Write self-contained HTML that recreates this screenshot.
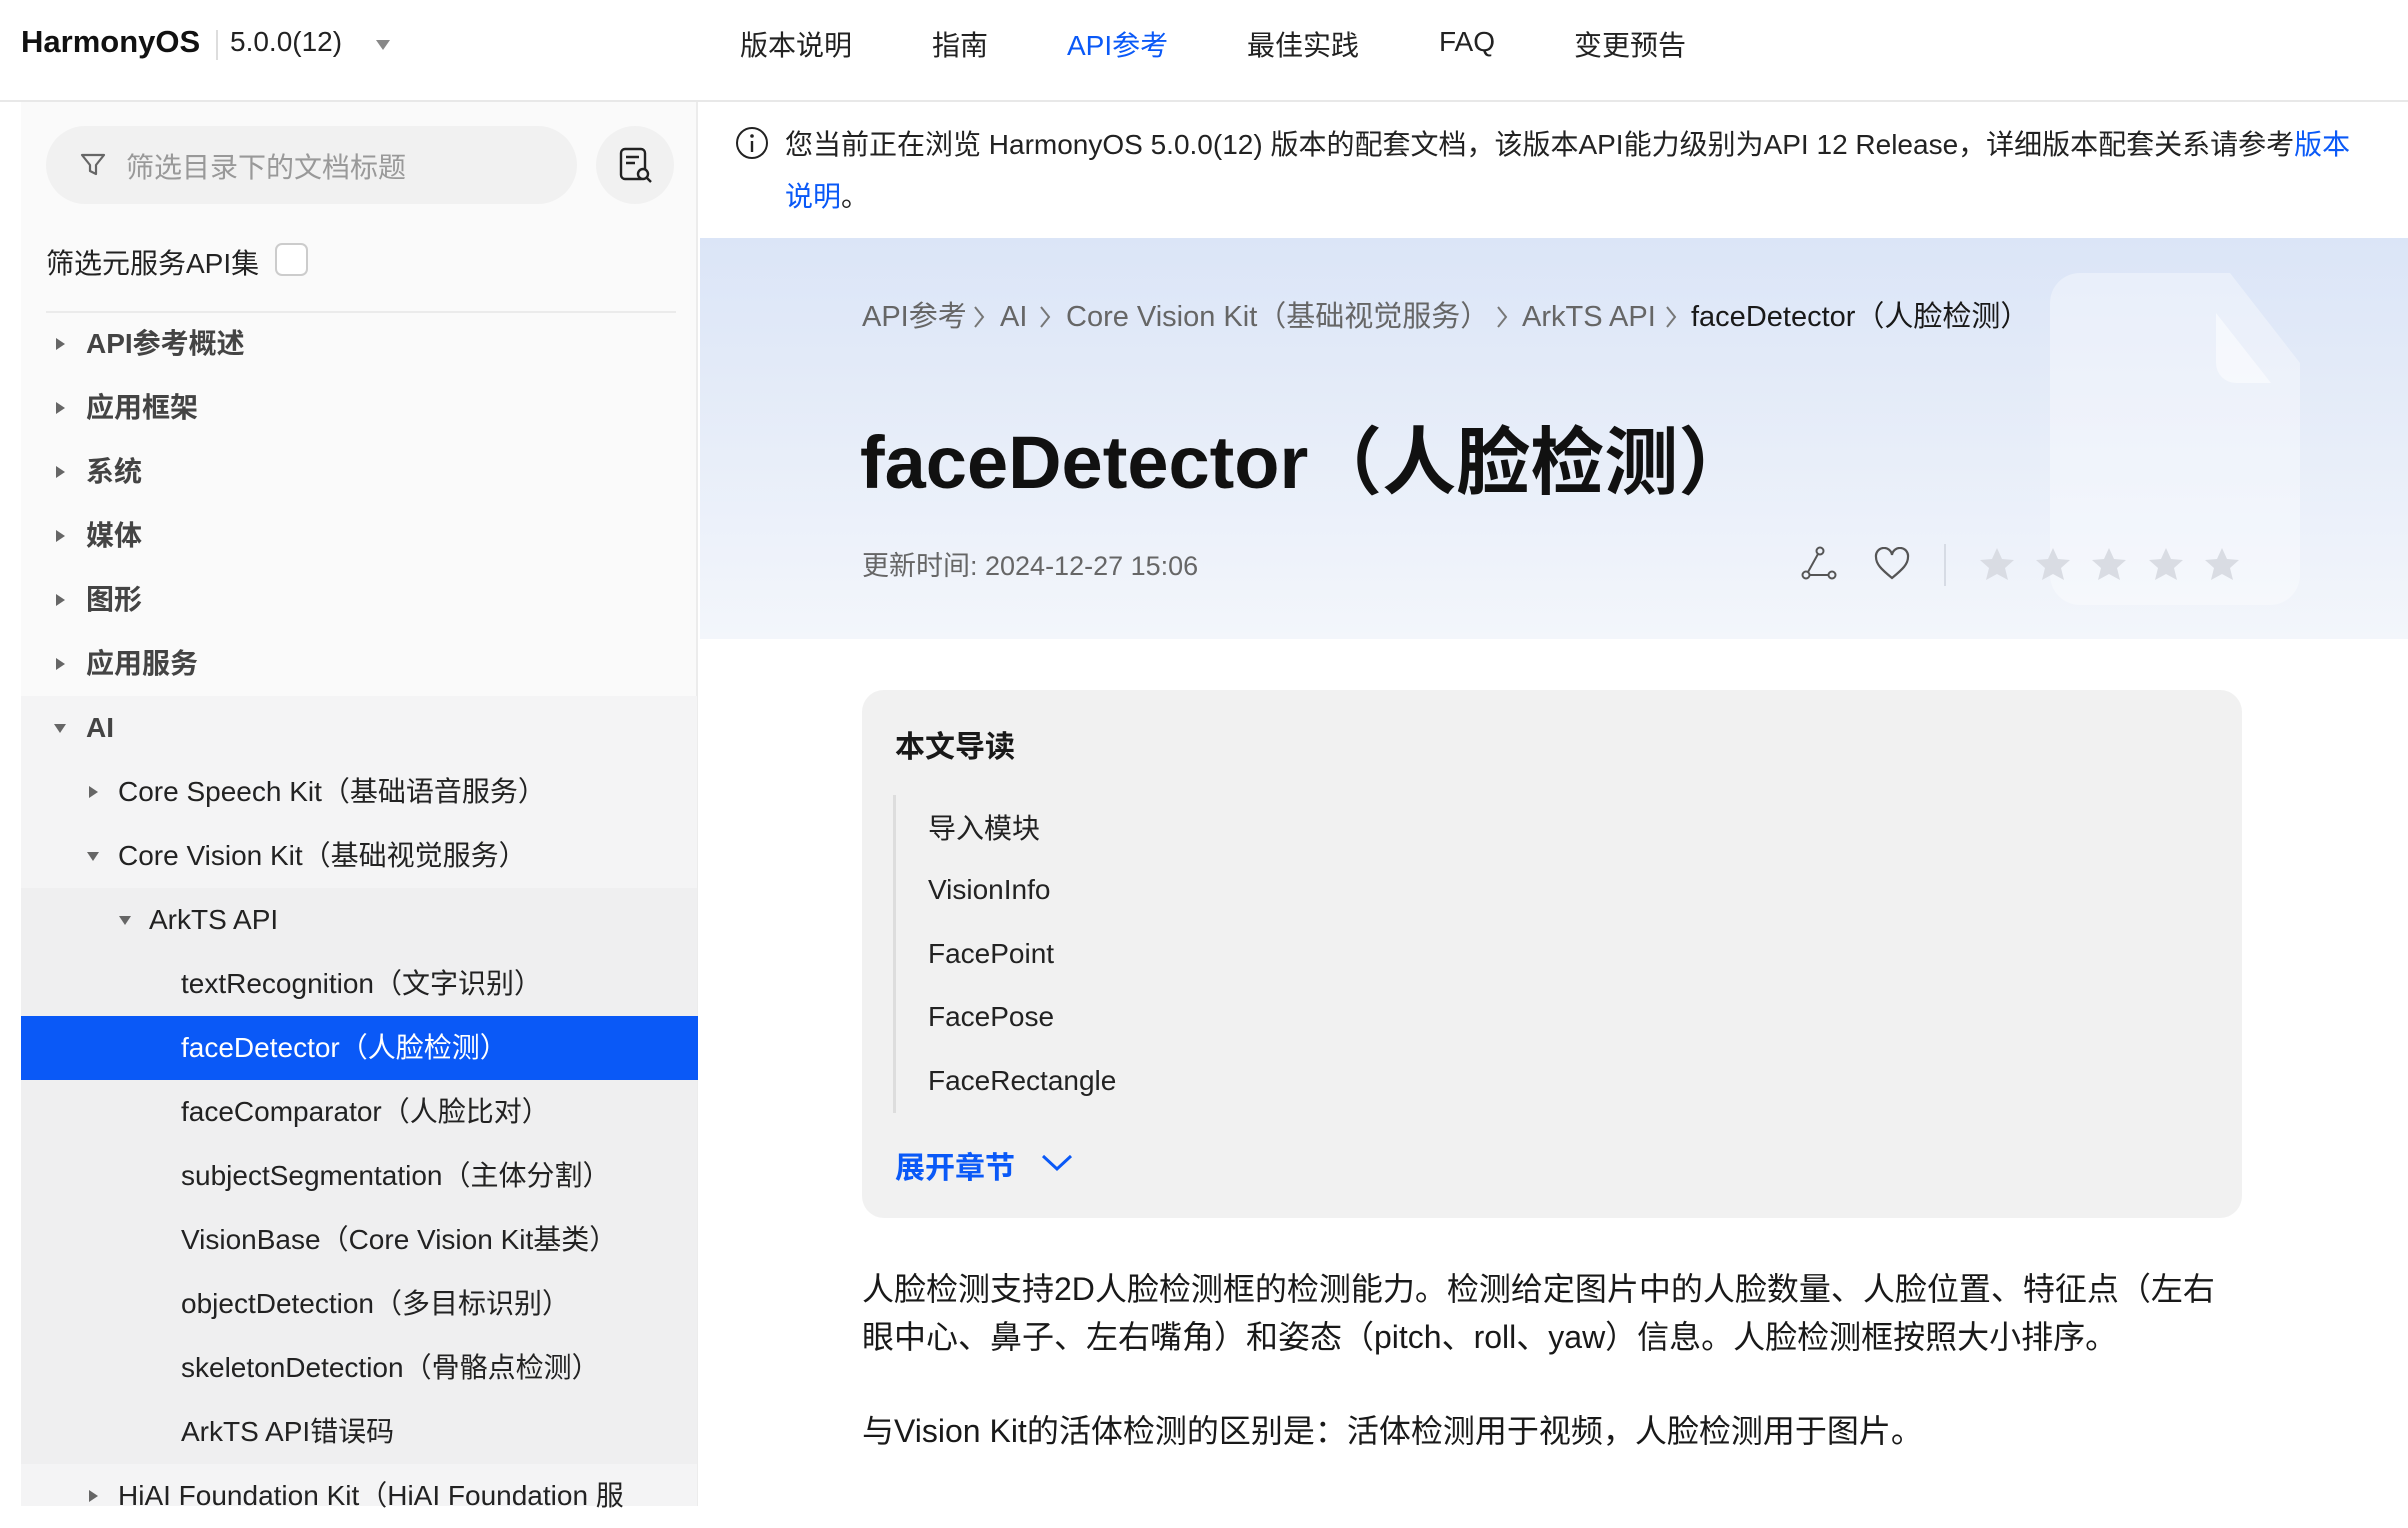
<!DOCTYPE html>
<html><head><meta charset="utf-8"><style>
*{margin:0;padding:0;box-sizing:border-box}
body{width:2408px;height:1506px;overflow:hidden;background:#fff;font-family:"Liberation Sans","Noto Sans CJK SC",sans-serif;color:#191919;position:relative}
.a{position:absolute;white-space:nowrap}
.nav{font-size:28px;top:24px;color:#222}
.row{position:absolute;left:21px;width:677px;height:64px;line-height:64px;font-size:28px;color:#222;white-space:nowrap}
.tri{position:absolute;width:0;height:0}
.tr{border-left:9px solid #666;border-top:6px solid transparent;border-bottom:6px solid transparent;top:26px}
.td{border-top:9px solid #666;border-left:6px solid transparent;border-right:6px solid transparent;top:28px}
.toc{position:absolute;left:928px;font-size:28px;color:#222;white-space:nowrap}
.bc{position:absolute;top:296px;height:42px;line-height:42px;font-size:29px;color:#666;white-space:nowrap}
.ch{position:absolute;top:304px}
</style></head><body>
<!-- header -->
<div class="a" style="left:21px;top:24px;font-size:31px;font-weight:bold;color:#111">HarmonyOS</div>
<div class="a" style="left:216px;top:30px;width:2px;height:30px;background:#ddd"></div>
<div class="a" style="left:230px;top:26px;font-size:28px;color:#222">5.0.0(12)</div>
<div class="a" style="left:376px;top:40px;border-top:10px solid #888;border-left:7px solid transparent;border-right:7px solid transparent;width:0"></div>
<div class="a nav" style="left:740px">版本说明</div>
<div class="a nav" style="left:932px">指南</div>
<div class="a nav" style="left:1067px;color:#0a59f7">API参考</div>
<div class="a nav" style="left:1247px">最佳实践</div>
<div class="a nav" style="left:1439px;top:26px">FAQ</div>
<div class="a nav" style="left:1574px">变更预告</div>
<div class="a" style="left:0;top:100px;width:2408px;height:2px;background:#e8e8e8"></div>
<!-- sidebar -->
<div class="a" style="left:21px;top:102px;width:677px;height:1404px;background:#fafafa;border-right:2px solid #ececec"></div>
<div class="a" style="left:46px;top:126px;width:531px;height:78px;border-radius:39px;background:#f1f1f1"></div>
<svg class="a" style="left:78px;top:150px" width="30" height="30" viewBox="0 0 30 30"><path d="M4 5h22l-8 10v9l-6-3v-6z" fill="none" stroke="#666" stroke-width="2.2" stroke-linejoin="round"/></svg>
<div class="a" style="left:126px;top:146px;font-size:28px;color:#999">筛选目录下的文档标题</div>
<div class="a" style="left:596px;top:126px;width:78px;height:78px;border-radius:39px;background:#f1f1f1"></div>
<svg class="a" style="left:616px;top:146px" width="38" height="38" viewBox="0 0 38 38"><rect x="5" y="3" width="24" height="30" rx="4" fill="none" stroke="#222" stroke-width="2.4"/><path d="M10 11h13M10 17h9" stroke="#222" stroke-width="2.4"/><circle cx="27" cy="28" r="5" fill="#f1f1f1" stroke="#222" stroke-width="2.4"/><path d="M31 32l4 4" stroke="#222" stroke-width="2.4"/></svg>
<div class="a" style="left:46px;top:242px;font-size:28px;color:#222">筛选元服务API集</div>
<div class="a" style="left:275px;top:243px;width:33px;height:33px;border:2px solid #ccc;border-radius:7px;background:#fff"></div>
<div class="a" style="left:46px;top:311px;width:630px;height:2px;background:#ebebeb"></div>
<!-- groups bg -->
<div class="a" style="left:21px;top:696px;width:676px;height:810px;background:#f4f4f5"></div>
<div class="a" style="left:21px;top:888px;width:676px;height:576px;background:#efeff0"></div>
<div class="row" style="top:312px;padding-left:65px;font-weight:bold;color:#444"><i class="tri tr" style="left:35px"></i>API参考概述</div>
<div class="row" style="top:376px;padding-left:65px;font-weight:bold;color:#444"><i class="tri tr" style="left:35px"></i>应用框架</div>
<div class="row" style="top:440px;padding-left:65px;font-weight:bold;color:#444"><i class="tri tr" style="left:35px"></i>系统</div>
<div class="row" style="top:504px;padding-left:65px;font-weight:bold;color:#444"><i class="tri tr" style="left:35px"></i>媒体</div>
<div class="row" style="top:568px;padding-left:65px;font-weight:bold;color:#444"><i class="tri tr" style="left:35px"></i>图形</div>
<div class="row" style="top:632px;padding-left:65px;font-weight:bold;color:#444"><i class="tri tr" style="left:35px"></i>应用服务</div>
<div class="row" style="top:696px;padding-left:65px;font-weight:bold;color:#444"><i class="tri td" style="left:33px"></i>AI</div>
<div class="row" style="top:760px;padding-left:97px"><i class="tri tr" style="left:68px"></i>Core Speech Kit（基础语音服务）</div>
<div class="row" style="top:824px;padding-left:97px"><i class="tri td" style="left:66px"></i>Core Vision Kit（基础视觉服务）</div>
<div class="row" style="top:888px;padding-left:128px"><i class="tri td" style="left:98px"></i>ArkTS API</div>
<div class="row" style="top:952px;padding-left:160px">textRecognition（文字识别）</div>
<div class="row" style="top:1016px;padding-left:160px;background:#0a59f7;color:#fff">faceDetector（人脸检测）</div>
<div class="row" style="top:1080px;padding-left:160px">faceComparator（人脸比对）</div>
<div class="row" style="top:1144px;padding-left:160px">subjectSegmentation（主体分割）</div>
<div class="row" style="top:1208px;padding-left:160px">VisionBase（Core Vision Kit基类）</div>
<div class="row" style="top:1272px;padding-left:160px">objectDetection（多目标识别）</div>
<div class="row" style="top:1336px;padding-left:160px">skeletonDetection（骨骼点检测）</div>
<div class="row" style="top:1400px;padding-left:160px">ArkTS API错误码</div>
<div class="row" style="top:1464px;padding-left:97px;overflow:hidden;width:640px"><i class="tri tr" style="left:68px"></i>HiAI Foundation Kit（HiAI Foundation 服</div>
<!-- notice -->
<svg class="a" style="left:735px;top:126px" width="34" height="34" viewBox="0 0 34 34"><circle cx="17" cy="17" r="15" fill="none" stroke="#222" stroke-width="2"/><circle cx="17" cy="10" r="1.8" fill="#222"/><path d="M17 15v11" stroke="#222" stroke-width="2.4"/></svg>
<div class="a" style="left:785px;top:123px;font-size:28px;color:#222">您当前正在浏览 HarmonyOS 5.0.0(12) 版本的配套文档，该版本API能力级别为API 12 Release，详细版本配套关系请参考<span style="color:#0a59f7">版本</span></div>
<div class="a" style="left:785px;top:175px;font-size:28px;color:#222"><span style="color:#0a59f7">说明</span>。</div>
<!-- hero -->
<div class="a" style="left:700px;top:238px;width:1708px;height:401px;background:linear-gradient(180deg,#dbe5f7 0%,#e8eef9 55%,#f3f6fb 100%)"></div>
<svg class="a" style="left:2050px;top:273px" width="270" height="332" viewBox="0 0 270 332"><path d="M30 0h150l70 90v212a30 30 0 0 1-30 30H30a30 30 0 0 1-30-30V30A30 30 0 0 1 30 0z" fill="#fff" opacity=".35"/><path d="M166 40l55 70h-35a20 20 0 0 1-20-20z" fill="#fff" opacity=".5"/></svg>
<div class="bc" style="left:862px">API参考</div>
<div class="bc" style="left:1000px">AI</div>
<div class="bc" style="left:1066px">Core Vision Kit（基础视觉服务）</div>
<div class="bc" style="left:1522px">ArkTS API</div>
<div class="bc" style="left:1691px;color:#191919">faceDetector（人脸检测）</div>
<svg class="ch" style="left:972px" width="14" height="26" viewBox="0 0 14 26"><path d="M3 3l8 10-8 10" fill="none" stroke="#777" stroke-width="2"/></svg>
<svg class="ch" style="left:1038px" width="14" height="26" viewBox="0 0 14 26"><path d="M3 3l8 10-8 10" fill="none" stroke="#777" stroke-width="2"/></svg>
<svg class="ch" style="left:1495px" width="14" height="26" viewBox="0 0 14 26"><path d="M3 3l8 10-8 10" fill="none" stroke="#777" stroke-width="2"/></svg>
<svg class="ch" style="left:1664px" width="14" height="26" viewBox="0 0 14 26"><path d="M3 3l8 10-8 10" fill="none" stroke="#777" stroke-width="2"/></svg>
<div class="a" style="left:860px;top:403px;font-size:74px;font-weight:bold;color:#111">faceDetector（人脸检测）</div>
<div class="a" style="left:862px;top:544px;font-size:27px;color:#666">更新时间: 2024-12-27 15:06</div>
<svg class="a" style="left:1800px;top:546px" width="40" height="36" viewBox="0 0 40 36"><circle cx="20" cy="5" r="3.5" fill="none" stroke="#555" stroke-width="2"/><circle cx="6" cy="29" r="3.5" fill="none" stroke="#555" stroke-width="2"/><circle cx="32" cy="29" r="3.5" fill="none" stroke="#555" stroke-width="2"/><path d="M18 8L8 26M10 29h18" stroke="#555" stroke-width="2"/></svg>
<svg class="a" style="left:1873px;top:547px" width="38" height="34" viewBox="0 0 38 34"><path d="M19 31C8 22 3 17 3 10a8 8 0 0 1 16-2 8 8 0 0 1 16 2c0 7-5 12-16 21z" fill="none" stroke="#555" stroke-width="2.2"/></svg>
<div class="a" style="left:1944px;top:544px;width:2px;height:42px;background:#d6dbe4"></div>
<svg class="a" style="left:1978px;top:546px" width="264" height="38" viewBox="0 0 264 38">
<g fill="#d9dce3"><path id="s" d="M19 2l5 11 12 1-9 8 3 12-11-6-11 6 3-12-9-8 12-1z"/><use href="#s" x="56"/><use href="#s" x="112"/><use href="#s" x="169"/><use href="#s" x="225"/></g></svg>
<!-- toc -->
<div class="a" style="left:862px;top:690px;width:1380px;height:528px;border-radius:22px;background:#f1f1f1"></div>
<div class="a" style="left:895px;top:722px;font-size:30px;font-weight:bold;color:#191919">本文导读</div>
<div class="a" style="left:893px;top:795px;width:3px;height:318px;background:#ddd"></div>
<div class="toc" style="top:807px">导入模块</div>
<div class="toc" style="top:874px">VisionInfo</div>
<div class="toc" style="top:938px">FacePoint</div>
<div class="toc" style="top:1001px">FacePose</div>
<div class="toc" style="top:1065px">FaceRectangle</div>
<div class="a" style="left:895px;top:1143px;font-size:30px;font-weight:bold;color:#0a59f7">展开章节</div>
<svg class="a" style="left:1040px;top:1152px" width="34" height="22" viewBox="0 0 34 22"><path d="M3 4l14 13 14-13" fill="none" stroke="#0a59f7" stroke-width="3"/></svg>
<!-- body -->
<div class="a" style="left:862px;top:1265px;font-size:32px;line-height:48px;color:#191919">人脸检测支持2D人脸检测框的检测能力。检测给定图片中的人脸数量、人脸位置、特征点（左右<br>眼中心、鼻子、左右嘴角）和姿态（pitch、roll、yaw）信息。人脸检测框按照大小排序。</div>
<div class="a" style="left:862px;top:1407px;font-size:32px;line-height:48px;color:#191919">与Vision Kit的活体检测的区别是：活体检测用于视频，人脸检测用于图片。</div>
</body></html>
